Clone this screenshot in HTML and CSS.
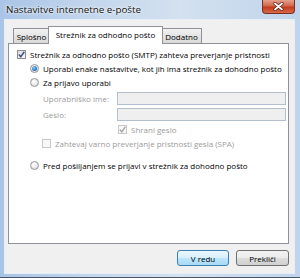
FILE: index.html
```html
<!DOCTYPE html>
<html lang="sl">
<head>
    <meta charset="UTF-8">
    <title>Nastavitve internetne e-pošte</title>
    <link rel="stylesheet" href="styles.css">
</head>
<body>
<div class="window">
    <div class="titlebar">
        <span class="title">Nastavitve internetne e-pošte</span>
        <span class="close">
            <svg width="11" height="9" viewBox="0 0 11 9">
                <path d="M2 1.5 L9 7.5 M9 1.5 L2 7.5" stroke="#5a1a10" stroke-width="3.2" stroke-linecap="round"/>
                <path d="M2 1.5 L9 7.5 M9 1.5 L2 7.5" stroke="#fff" stroke-width="1.8" stroke-linecap="round"/>
            </svg>
        </span>
    </div>
    <div class="client">
        <div class="tabs">
            <span class="tab first">Splošno</span>
            <span class="tab active">Strežnik za odhodno pošto</span>
            <span class="tab last">Dodatno</span>
        </div>
        <div class="panel">
            <div class="row">
                <span class="check on"><svg width="7" height="7" viewBox="0 0 7 7"><path d="M0.8 3.6 L2.8 5.8 L6.3 0.8" fill="none" stroke="#3f5589" stroke-width="1.5"/></svg></span>
                Strežnik za odhodno pošto (SMTP) zahteva preverjanje pristnosti
            </div>
            <div class="row sub">
                <span class="radio on"></span>
                Uporabi enake nastavitve, kot jih ima strežnik za dohodno pošto
            </div>
            <div class="row sub">
                <span class="radio"></span>
                Za prijavo uporabi
            </div>
            <div class="field user">
                <span class="flabel">Uporabniško ime:</span>
                <span class="input"></span>
            </div>
            <div class="field pass">
                <span class="flabel">Geslo:</span>
                <span class="input"></span>
            </div>
            <div class="row dis save">
                <span class="check on"><svg width="7" height="7" viewBox="0 0 7 7"><path d="M0.8 3.6 L2.8 5.8 L6.3 0.8" fill="none" stroke="#a3a3a3" stroke-width="1.4"/></svg></span>
                Shrani geslo
            </div>
            <div class="row dis spa">
                <span class="check"></span>
                Zahtevaj varno preverjanje pristnosti gesla (SPA)
            </div>
            <div class="row sub before">
                <span class="radio"></span>
                Pred pošiljanjem se prijavi v strežnik za dohodno pošto
            </div>
        </div>
        <div class="buttons">
            <button class="btn default">V redu</button>
            <button class="btn">Prekliči</button>
        </div>
    </div>
</div>
</body>
</html>
```
FILE: styles.css
```css
body {
    margin: 0;
    font-family: "Open Sans", "Noto Sans", sans-serif;
    font-size: 8px;
    color: #000;
}

.window {
    width: 300px;
    height: 278px;
    box-sizing: border-box;
    padding: 0 6px 4px 5px;
    border-bottom: 1px solid #4a5666;
    display: flex;
    flex-direction: column;
    background: linear-gradient(to right, #a9c4e6 0%, #c3d6ec 30%, #d3e1f0 60%, #c0d4eb 100%);
}

.titlebar {
    height: 20px;
    display: flex;
    justify-content: space-between;
    align-items: flex-start;
}
.title {
    margin: 3px 0 0 1px;
    font-size: 9.8px;
    color: #111;
    text-shadow: 0 0 4px #fff, 0 0 2px #fff;
}
.close {
    width: 33px;
    height: 14px;
    margin-right: -1px;
    box-sizing: border-box;
    border: 1px solid #7b2f22;
    border-top: 0;
    border-radius: 0 0 4px 4px;
    background: linear-gradient(#e4a08c, #d0674c 45%, #c23a1c 55%, #d8694a);
    display: flex;
    align-items: center;
    justify-content: center;
}

.client {
    flex: 1;
    background: #f0f0f0;
    padding: 0 5px 0 3px;
    display: flex;
    flex-direction: column;
    box-shadow: 0 0 0 1px #e6eef8;
}

.tabs {
    margin-top: 6px;
    height: 17px;
    padding-left: 5px;
    display: flex;
    align-items: flex-end;
}
.tab {
    height: 15px;
    box-sizing: border-box;
    border: 1px solid #8e9198;
    border-bottom: 0;
    background: linear-gradient(#f2f2f2, #e4e4e4 50%, #d9d9d9);
    display: flex;
    align-items: center;
    justify-content: center;
}
.tab.first {
    width: 36px;
    border-right: 0;
}
.tab.active {
    width: 115px;
    height: 18px;
    margin: 0 -1px -1px -1px;
    background: #fff;
    position: relative;
    z-index: 1;
    padding-bottom: 2px;
}
.tab.last {
    width: 40px;
    border-left: 0;
}

.panel {
    height: 201px;
    box-sizing: border-box;
    border: 1px solid #8e9198;
    background: #fff;
    padding: 3px 1px 0 8px;
}

.row {
    height: 14px;
    display: flex;
    align-items: center;
}
.row.sub {
    margin-left: 13px;
}
.row.dis {
    color: #9b9b9b;
}
.row.save {
    margin: 1px 0 0 101px;
}
.row.spa {
    margin-left: 25px;
}
.row.before {
    margin-top: 8px;
}

.check {
    width: 9px;
    height: 9px;
    box-sizing: border-box;
    border: 1px solid #8f8f8f;
    background: linear-gradient(135deg, #dcdcdc, #fafafa);
    margin-right: 4px;
    display: flex;
    align-items: center;
    justify-content: center;
    flex-shrink: 0;
}
.dis .check {
    border-color: #c8c8c8;
    background: #f7f7f7;
}

.radio {
    width: 9px;
    height: 9px;
    box-sizing: border-box;
    border: 1px solid #969696;
    border-radius: 50%;
    background: radial-gradient(circle at 40% 35%, #fff, #d6d6d6);
    margin-right: 4px;
    display: flex;
    align-items: center;
    justify-content: center;
    flex-shrink: 0;
}
.radio.on::after {
    content: "";
    width: 5px;
    height: 5px;
    border-radius: 50%;
    background: radial-gradient(circle at 40% 35%, #8fd0ff, #2a7fd0 55%, #134c8a);
}

.field {
    height: 13px;
    margin: 3px 0 0 26px;
    display: flex;
    align-items: center;
    color: #9b9b9b;
}
.flabel {
    width: 74px;
    flex-shrink: 0;
}
.input {
    flex: 1;
    height: 13px;
    box-sizing: border-box;
    margin-right: 1px;
    border: 1px solid #b4bfcd;
    background: #efefef;
}

.buttons {
    margin-top: 6px;
    display: flex;
    justify-content: flex-end;
    gap: 7px;
}
.btn {
    width: 53px;
    height: 16px;
    padding: 0;
    font-family: inherit;
    font-size: 8px;
    color: #000;
    border: 1px solid #707070;
    border-radius: 3px;
    background: linear-gradient(#f2f2f2, #ebebeb 50%, #dddddd 51%, #cfcfcf);
}
.btn.default {
    width: 52px;
    border-color: #3c7fb1;
    background: linear-gradient(#eaf6fd, #d9f0fc 50%, #bee6fd 51%, #a7d9f5);
}
```
